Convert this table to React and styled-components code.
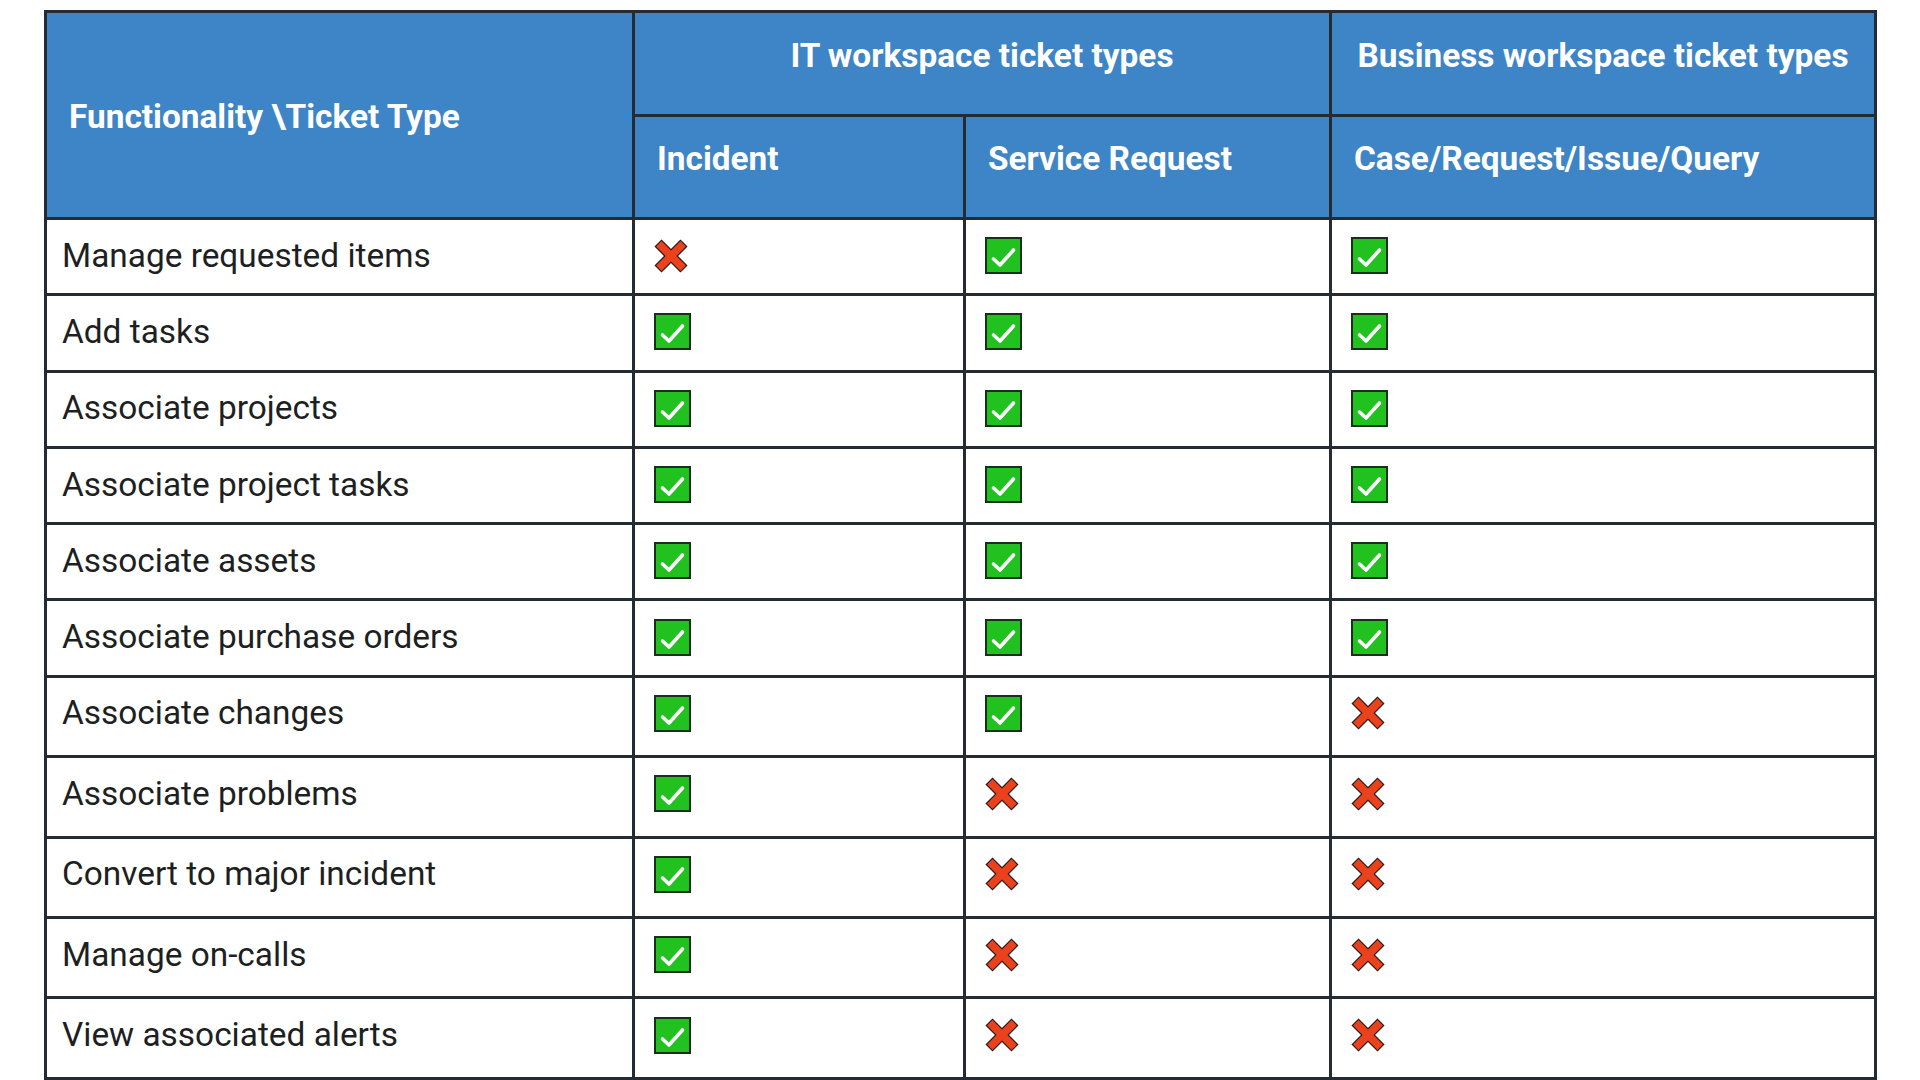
import React from 'react';
import styled, { createGlobalStyle } from 'styled-components';

const rows = [
  ['Manage requested items', false, true, true],
  ['Add tasks', true, true, true],
  ['Associate projects', true, true, true],
  ['Associate project tasks', true, true, true],
  ['Associate assets', true, true, true],
  ['Associate purchase orders', true, true, true],
  ['Associate changes', true, true, false],
  ['Associate problems', true, false, false],
  ['Convert to major incident', true, false, false],
  ['Manage on-calls', true, false, false],
  ['View associated alerts', true, false, false],
];

const CheckIcon = () => (
  <svg width="37" height="37" viewBox="0 0 37 37">
    <rect x="1" y="1" width="35" height="35" fill="#21c21f" stroke="#17301a" strokeWidth="2" />
    <polyline
      points="8.5,22 15,28 28.5,13"
      fill="none"
      stroke="#ffffff"
      strokeWidth="3.6"
      strokeLinecap="round"
      strokeLinejoin="round"
    />
  </svg>
);

const CrossIcon = () => (
  <svg width="34" height="34" viewBox="0 0 34 34">
    <g strokeLinecap="butt">
      <line x1="4" y1="4" x2="30" y2="30" stroke="#2b1610" strokeWidth="10" />
      <line x1="30" y1="4" x2="4" y2="30" stroke="#2b1610" strokeWidth="10" />
      <line x1="4.8" y1="4.8" x2="29.2" y2="29.2" stroke="#e9421d" strokeWidth="7.6" />
      <line x1="29.2" y1="4.8" x2="4.8" y2="29.2" stroke="#e9421d" strokeWidth="7.6" />
    </g>
  </svg>
);

const App = () => {
  return (
    <>
      <GlobalStyle />
      <Page>
        <Table>
          <colgroup>
            <col style={{ width: 588 }} />
            <col style={{ width: 331 }} />
            <col style={{ width: 366 }} />
            <col style={{ width: 545 }} />
          </colgroup>
          <thead>
            <HeadRow $height={104}>
              <HeadCell rowSpan={2} $middle>
                Functionality \Ticket Type
              </HeadCell>
              <HeadCell colSpan={2} $center>
                IT workspace ticket types
              </HeadCell>
              <HeadCell $center>Business workspace ticket types</HeadCell>
            </HeadRow>
            <HeadRow $height={103}>
              <HeadCell $sub>Incident</HeadCell>
              <HeadCell $sub>Service Request</HeadCell>
              <HeadCell $sub>Case/Request/Issue/Query</HeadCell>
            </HeadRow>
          </thead>
          <tbody>
            {rows.map(([label, ...flags], i) => (
              <BodyRow key={label} $tall={i >= 6}>
                <LabelCell $tall={i >= 6}>{label}</LabelCell>
                {flags.map((ok, j) => (
                  <IconCell key={j} $tall={i >= 6}>
                    <IconWrap>{ok ? <CheckIcon /> : <CrossIcon />}</IconWrap>
                  </IconCell>
                ))}
              </BodyRow>
            ))}
          </tbody>
        </Table>
      </Page>
    </>
  );
};

const GlobalStyle = createGlobalStyle`
  html, body {
    margin: 0;
    padding: 0;
    background: #ffffff;
  }
  body {
    font-family: Roboto, "Liberation Sans", Arial, sans-serif;
  }
`;

const Page = styled.div`
  padding: 10px 0 0 44px;
  height: 1080px;
  overflow: hidden;
  box-sizing: border-box;
`;

const Table = styled.table`
  width: 1833px;
  table-layout: fixed;
  border-collapse: collapse;
  font-family: Roboto, "Liberation Sans", Arial, sans-serif;
  font-size: 33.4px;
  line-height: 1.2;
`;

const HeadRow = styled.tr`
  height: ${p => p.$height}px;
  background: #3d85c6;
`;

const HeadCell = styled.th`
  border: 3px solid #252b33;
  color: #ffffff;
  font-weight: 700;
  text-align: ${p => (p.$center ? 'center' : 'left')};
  vertical-align: ${p => (p.$middle ? 'middle' : 'top')};
  padding: ${p => (p.$middle ? '5px 22px 0' : p.$sub ? '22px 22px 0' : '23px 22px 0')};
  white-space: nowrap;
`;

const BodyRow = styled.tr`
  height: ${p => (p.$tall ? 80.4 : 76.3)}px;
  background: #ffffff;
`;

const LabelCell = styled.td`
  border: 3px solid #252b33;
  color: #1d1f22;
  font-weight: 400;
  padding: 0 15px ${p => (p.$tall ? 6 : 2)}px;
  vertical-align: middle;
  white-space: nowrap;
`;

const IconCell = styled.td`
  border: 3px solid #252b33;
  padding: 0 19px ${p => (p.$tall ? 6 : 2)}px;
  vertical-align: middle;
`;

const IconWrap = styled.div`
  display: flex;
  align-items: center;
  height: 37px;
`;

export default App;
